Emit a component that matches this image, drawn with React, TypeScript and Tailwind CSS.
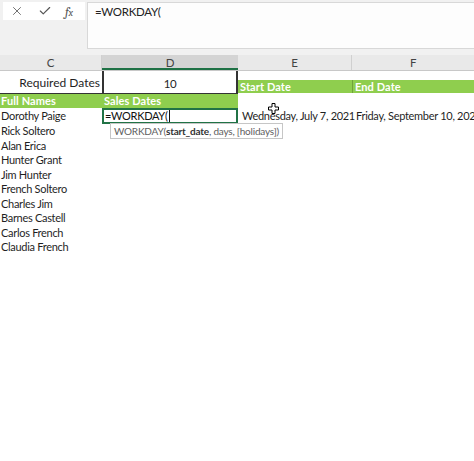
import { X, Check } from 'lucide-react'

const names = [
  'Rick Soltero',
  'Alan Erica',
  'Hunter Grant',
  'Jim Hunter',
  'French Soltero',
  'Charles Jim',
  'Barnes Castell',
  'Carlos French',
  'Claudia French',
]

export default function App() {
  return (
    <div
      className="relative w-[474px] h-[461px] overflow-hidden bg-white text-[#1f1f1f] tracking-[-0.3px]"
      style={{ fontFamily: 'Lato, "Liberation Sans", sans-serif' }}
    >
      {/* Formula bar */}
      <div className="flex h-[55px] bg-[#f1f1f1] pt-[2px]">
        <div className="ml-[3px] flex h-[18px] w-[82px] items-center bg-white text-[#555]">
          <X className="ml-[7px] h-[14px] w-[14px]" strokeWidth={1.4} />
          <Check className="ml-[14px] h-[14px] w-[14px]" strokeWidth={2} />
          <span className="ml-[13px] font-serif text-[13px] italic leading-none text-[#555]">
            f<span className="text-[10px]">x</span>
          </span>
        </div>
        <div className="ml-[2px] h-[47px] flex-1 border border-r-0 border-[#d8d8d8] bg-[#fdfdfd] pl-[7px] pt-0 text-[11.5px] text-[#222]">
          =WORKDAY(
        </div>
      </div>

      {/* Column headers */}
      <div className="flex h-[16px] border-b border-[#c8c8c8] bg-[#e9e9e9] text-[11.5px] leading-[15px] text-[#444]">
        <div className="w-[102px] border-r border-[#d0d0d0] text-center">C</div>
        <div className="w-[136px] border-b-2 border-[#1e7145] bg-[#d4d4d4] text-center">D</div>
        <div className="w-[114px] border-r border-[#d0d0d0] text-center">E</div>
        <div className="flex-1 text-center">F</div>
      </div>

      {/* Required dates row */}
      <div className="flex h-[23px] text-[11.5px]">
        <div className="flex w-[102px] items-end justify-end border-b border-[#333] pb-[1px] pr-[2px] text-[12px] tracking-normal">
          Required Dates
        </div>
        <div className="flex w-[136px] items-end justify-center border-x-2 border-b border-[#333] pb-[1px]">
          10
        </div>
        <div className="flex w-[114px] flex-col justify-end pb-[1px]">
          <div className="h-[13px] bg-[#8fce4e] pl-[2px] text-[11px] font-bold leading-[13px] tracking-[0.1px] text-white">
            Start Date
          </div>
        </div>
        <div className="flex flex-1 flex-col justify-end pb-[1px]">
          <div className="h-[13px] border-l border-[#6fa33a] bg-[#8fce4e] pl-[2px] text-[11px] font-bold leading-[13px] tracking-[0.1px] text-white">
            End Date
          </div>
        </div>
      </div>

      {/* Green header row */}
      <div className="flex h-[14px] text-[11px] font-bold leading-[14px] tracking-[0.1px] text-white">
        <div className="w-[102px] bg-[#8fce4e] pl-[1px]">Full Names</div>
        <div className="w-[136px] bg-[#8fce4e] pl-[2px]">Sales Dates</div>
      </div>

      {/* First data row with editing cell */}
      <div className="flex h-[16px] text-[11px] leading-[14px]">
        <div className="w-[102px] pl-[1px] pt-[1px]">Dorothy Paige</div>
        <div className="flex w-[136px] items-center border-2 border-[#217346] pl-[1px] text-[#111]">
          =WORKDAY(
          <span className="ml-[1px] h-[12px] w-px bg-[#111]" />
        </div>
        <div className="w-[114px] whitespace-nowrap pl-[4px] pt-[1px]">Wednesday, July 7, 2021</div>
        <div className="flex-1 overflow-hidden whitespace-nowrap pl-[4px] pt-[1px]">
          Friday, September 10, 2021
        </div>
      </div>

      {/* Names */}
      <div className="flex flex-col text-[11px]">
        {names.map((n) => (
          <div key={n} className="h-[14.5px] pl-[1px] leading-[14.5px]">
            {n}
          </div>
        ))}
      </div>

      {/* Function tooltip */}
      <div className="absolute left-[110px] top-[123px] h-[16px] whitespace-nowrap border border-[#c6c6c6] bg-white px-[3px] text-[10px] leading-[14px] tracking-[-0.2px] text-[#606060]">
        WORKDAY(<span className="font-bold text-[#333]">start_date</span>, days, [holidays])
      </div>

      {/* Mouse cursor */}
      <svg className="absolute left-[268px] top-[103px]" width="11" height="11" viewBox="0 0 11 11">
        <path
          d="M4 0.5h3v3.5h3.5v3h-3.5v3.5h-3v-3.5h-3.5v-3h3.5z"
          fill="white"
          stroke="black"
          strokeWidth="1"
        />
      </svg>
    </div>
  )
}
